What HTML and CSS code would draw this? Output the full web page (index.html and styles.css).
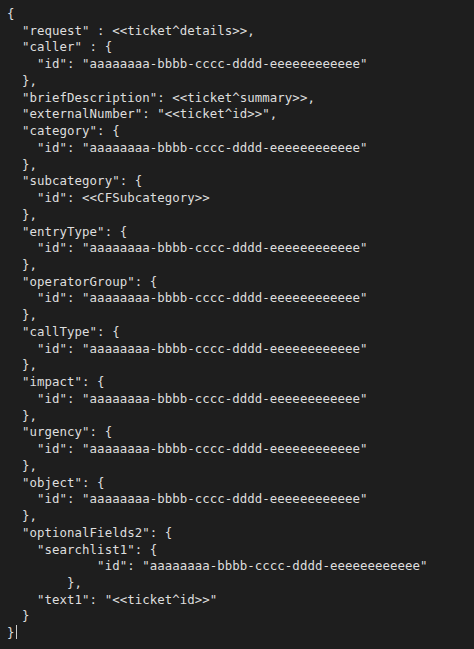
FILE: index.html
```html
<!DOCTYPE html>
<html>
<head>
<meta charset="utf-8">
<link rel="stylesheet" href="styles.css">
</head>
<body>
<pre class="code">{
  "request" : &lt;&lt;ticket^details&gt;&gt;,
  "caller" : {
    "id": "aaaaaaaa-bbbb-cccc-dddd-eeeeeeeeeeee"
  },
  "briefDescription": &lt;&lt;ticket^summary&gt;&gt;,
  "externalNumber": "&lt;&lt;ticket^id&gt;&gt;",
  "category": {
    "id": "aaaaaaaa-bbbb-cccc-dddd-eeeeeeeeeeee"
  },
  "subcategory": {
    "id": &lt;&lt;CFSubcategory&gt;&gt;
  },
  "entryType": {
    "id": "aaaaaaaa-bbbb-cccc-dddd-eeeeeeeeeeee"
  },
  "operatorGroup": {
    "id": "aaaaaaaa-bbbb-cccc-dddd-eeeeeeeeeeee"
  },
  "callType": {
    "id": "aaaaaaaa-bbbb-cccc-dddd-eeeeeeeeeeee"
  },
  "impact": {
    "id": "aaaaaaaa-bbbb-cccc-dddd-eeeeeeeeeeee"
  },
  "urgency": {
    "id": "aaaaaaaa-bbbb-cccc-dddd-eeeeeeeeeeee"
  },
  "object": {
    "id": "aaaaaaaa-bbbb-cccc-dddd-eeeeeeeeeeee"
  },
  "optionalFields2": {
    "searchlist1": {
            "id": "aaaaaaaa-bbbb-cccc-dddd-eeeeeeeeeeee"
        },
    "text1": "&lt;&lt;ticket^id&gt;&gt;"
  }
}<span class="caret"></span></pre>
</body>
</html>
```
FILE: styles.css
```css
html, body {
  margin: 0;
  padding: 0;
  background: #1e1e1e;
  height: 100%;
}
.code {
  margin: 0;
  padding: 6px 0 0 7px;
  font-family: "DejaVu Sans Mono", "Liberation Mono", monospace;
  font-size: 12.4px;
  letter-spacing: 0.05px;
  line-height: 16.74px;
  color: #dedede;
  white-space: pre;
}
.caret {
  display: inline-block;
  width: 1px;
  height: 14px;
  background: #cfcfcf;
  vertical-align: -2px;
  margin-left: 1px;
}
```
